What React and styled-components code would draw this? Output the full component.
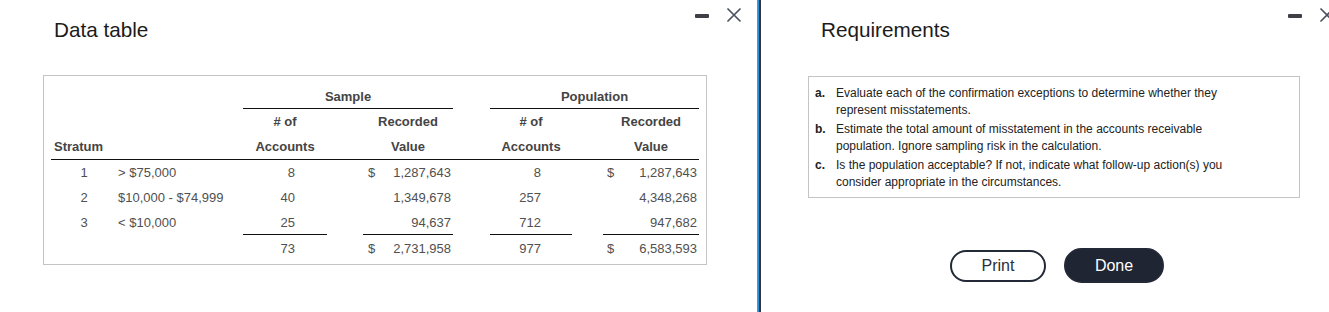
import React from 'react';
import styled, { createGlobalStyle } from 'styled-components';

const GlobalStyle = createGlobalStyle`
  html, body {
    margin: 0;
    padding: 0;
    background: #fff;
  }
  body {
    font-family: "Liberation Sans", Arial, sans-serif;
    overflow: hidden;
  }
`;

const strata = [
  { id: 1, range: '> $75,000', count: '8', value: '1,287,643', popCount: '8', popValue: '1,287,643', cur: true },
  { id: 2, range: '$10,000 - $74,999', count: '40', value: '1,349,678', popCount: '257', popValue: '4,348,268' },
  { id: 3, range: '< $10,000', count: '25', value: '94,637', popCount: '712', popValue: '947,682', last: true },
];

const requirements = [
  { key: 'a.', text: 'Evaluate each of the confirmation exceptions to determine whether they represent misstatements.' },
  { key: 'b.', text: 'Estimate the total amount of misstatement in the accounts receivable population. Ignore sampling risk in the calculation.' },
  { key: 'c.', text: 'Is the population acceptable? If not, indicate what follow-up action(s) you consider appropriate in the circumstances.' },
];

const colWidths = [66, 126, 84, 36, 15, 75, 37, 82, 31, 15, 81];

const WindowControls = () => (
  <Controls>
    <Minimize />
    <svg width="14" height="14" viewBox="0 0 14 14">
      <path d="M1 1 L13 13 M13 1 L1 13" stroke="#4b5160" strokeWidth="1.7" strokeLinecap="round" />
    </svg>
  </Controls>
);

const DataTable = () => (
  <TableBox>
    <Table>
      <colgroup>
        {colWidths.map((w, i) => (
          <col key={i} style={{ width: w }} />
        ))}
      </colgroup>
      <tbody>
        <tr>
          <Cell colSpan={2} />
          <Head colSpan={4} $line>Sample</Head>
          <Cell />
          <Head colSpan={4} $line>Population</Head>
        </tr>
        <tr>
          <Cell colSpan={2} />
          <Head># of</Head>
          <Cell />
          <Head colSpan={2}>Recorded</Head>
          <Cell />
          <Head># of</Head>
          <Cell />
          <Head colSpan={2}>Recorded</Head>
        </tr>
        <HeadRow>
          <Head colSpan={2} $align="left" $pl={3}>Stratum</Head>
          <Head>Accounts</Head>
          <Cell />
          <Head colSpan={2}>Value</Head>
          <Cell />
          <Head>Accounts</Head>
          <Cell />
          <Head colSpan={2}>Value</Head>
        </HeadRow>
        {strata.map(row => (
          <tr key={row.id}>
            <Cell $align="center">{row.id}</Cell>
            <Cell $pl={1}>{row.range}</Cell>
            <Cell $align="right" $pr={32} $line={row.last}>{row.count}</Cell>
            <Cell />
            <Cell $pl={5} $line={row.last}>{row.cur ? '$' : ''}</Cell>
            <Cell $align="right" $pr={2} $line={row.last}>{row.value}</Cell>
            <Cell />
            <Cell $align="right" $pr={31} $line={row.last}>{row.popCount}</Cell>
            <Cell />
            <Cell $pl={4} $line={row.last}>{row.cur ? '$' : ''}</Cell>
            <Cell $align="right" $pr={2} $line={row.last}>{row.popValue}</Cell>
          </tr>
        ))}
        <TotalRow>
          <Cell colSpan={2} />
          <Cell $align="right" $pr={32}>73</Cell>
          <Cell />
          <Cell $pl={5}>$</Cell>
          <Cell $align="right" $pr={2}>2,731,958</Cell>
          <Cell />
          <Cell $align="right" $pr={31}>977</Cell>
          <Cell />
          <Cell $pl={4}>$</Cell>
          <Cell $align="right" $pr={2}>6,583,593</Cell>
        </TotalRow>
      </tbody>
    </Table>
  </TableBox>
);

export default function App() {
  return (
    <>
      <GlobalStyle />
      <Page>
        <Panel $width={757}>
          <Header $pl={54}>
            <Title>Data table</Title>
            <WindowControls />
          </Header>
          <DataTable />
        </Panel>
        <Divider />
        <Panel $width={589}>
          <Header $pl={60}>
            <Title>Requirements</Title>
            <WindowControls />
          </Header>
          <ReqBox>
            {requirements.map(r => (
              <ReqItem key={r.key}>
                <ReqKey>{r.key}</ReqKey>
                <ReqText>{r.text}</ReqText>
              </ReqItem>
            ))}
          </ReqBox>
          <ButtonRow>
            <Button>Print</Button>
            <Button $primary>Done</Button>
          </ButtonRow>
        </Panel>
      </Page>
    </>
  );
}

const Page = styled.div`
  display: flex;
  width: 1329px;
  height: 312px;
  overflow: hidden;
`;

const Panel = styled.section`
  flex: 0 0 ${({ $width }) => $width}px;
  display: flex;
  flex-direction: column;
  box-sizing: border-box;
`;

const Divider = styled.div`
  flex: 0 0 4px;
  background: linear-gradient(to right, #5aa9e0 0, #2a8fd8 1px, #2a8fd8 2px, #3b3d42 2px, #2f3136 4px);
`;

const Header = styled.header`
  display: flex;
  justify-content: space-between;
  align-items: flex-start;
  padding: 0 16px 0 ${({ $pl }) => $pl}px;
  height: 42px;
`;

const Title = styled.h1`
  margin: 18px 0 0;
  font-size: 20.7px;
  line-height: 24px;
  font-weight: 400;
  color: #1b1b1b;
`;

const Controls = styled.div`
  display: flex;
  align-items: center;
  gap: 18px;
  margin-top: 8px;
  height: 14px;
`;

const Minimize = styled.span`
  display: block;
  width: 14px;
  height: 4px;
  margin-top: 2px;
  border-radius: 1px;
  background: #3f4045;
`;

const TableBox = styled.div`
  box-sizing: border-box;
  width: 664px;
  height: 190px;
  margin: 33px 0 0 43px;
  padding: 8px 7px 4px;
  border: 1px solid #c4c4c4;
`;

const Table = styled.table`
  border-collapse: collapse;
  table-layout: fixed;
  width: 648px;
  font-size: 13px;
  color: #505050;
`;

const Cell = styled.td`
  height: 24px;
  padding: 0 ${({ $pr }) => $pr || 0}px 0 ${({ $pl }) => $pl || 0}px;
  text-align: ${({ $align }) => $align || 'left'};
  white-space: nowrap;
  border-bottom: 1px solid ${({ $line }) => ($line ? '#111' : 'transparent')};
`;

const Head = styled.th`
  height: 24px;
  padding: 0 0 0 ${({ $pl }) => $pl || 0}px;
  text-align: ${({ $align }) => $align || 'center'};
  font-weight: 700;
  color: #444;
  white-space: nowrap;
  border-bottom: 1px solid ${({ $line }) => ($line ? '#111' : 'transparent')};
`;

const HeadRow = styled.tr`
  & > th,
  & > td {
    border-bottom: 1px solid #111;
    height: 25px;
  }
`;

const TotalRow = styled.tr`
  & > td {
    height: 26px;
  }
`;

const ReqBox = styled.div`
  box-sizing: border-box;
  width: 492px;
  margin: 34px 0 0 47px;
  padding: 8px 8px 7px 6px;
  border: 1px solid #c4c4c4;
  font-size: 12px;
  line-height: 16.5px;
  color: #222;
`;

const ReqItem = styled.div`
  display: flex;
  & + & {
    margin-top: 3px;
  }
`;

const ReqKey = styled.span`
  flex: 0 0 21px;
  font-weight: 700;
`;

const ReqText = styled.span`
  max-width: 412px;
`;

const ButtonRow = styled.div`
  display: flex;
  align-items: center;
  justify-content: center;
  gap: 18px;
  width: 492px;
  margin: 50px 0 0 50px;
`;

const Button = styled.button`
  box-sizing: border-box;
  width: ${({ $primary }) => ($primary ? 100 : 96)}px;
  height: ${({ $primary }) => ($primary ? 35 : 32)}px;
  border: 2px solid #232936;
  border-radius: 18px;
  background: ${({ $primary }) => ($primary ? '#1f2533' : '#fff')};
  color: ${({ $primary }) => ($primary ? '#fff' : '#2a2f3a')};
  font-family: "Liberation Sans", Arial, sans-serif;
  font-size: 16px;
  cursor: pointer;
`;
